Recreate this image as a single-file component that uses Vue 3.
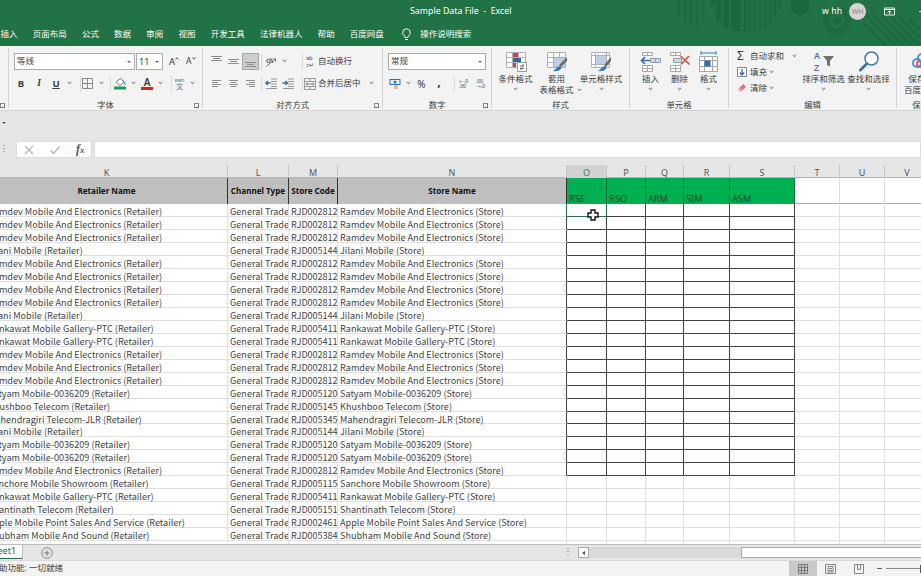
<template>
  <div class="window">
    <header class="top">
      <svg class="deco" width="260" height="46" viewBox="0 0 260 46">
        <g stroke="#1b643b" fill="none">
          <path
            d="M19 0V16M25 0V22M31 0V26M37 0V28M43 0V20"
            stroke-width="2.4"
            opacity="0.75"
          />
          <path d="M53 0V6M59 0V22M66 0V28" stroke-width="5" />
          <path d="M76 0V31" stroke-width="9" />
          <path
            d="M85 0V32M90 0V32M95 0V31M100 0V30M105 0V28M110 0V24M115 0V18M120 0V10"
            stroke-width="2.5"
            opacity="0.8"
          />
          <circle cx="177" cy="21" r="11" stroke-width="6" opacity="0.7" />
          <path
            d="M203 22L226 46M205 15L236 46M212 14L244 46M222 16L252 46M231 17L260 46M240 18L260 38M249 19L260 30"
            stroke-width="3"
            opacity="0.8"
          />
        </g>
        <circle cx="140" cy="6" r="9.5" fill="#1b643b" />
        <circle cx="177" cy="21" r="4" fill="#1b643b" opacity="0.8" />
      </svg>
      <div class="title-bar">
        <span class="file-name">Sample Data File &nbsp;-&nbsp; Excel</span>
        <span class="user">w hh</span>
        <span class="avatar">WH</span>
        <svg class="ribbon-toggle" width="11" height="9" viewBox="0 0 11 9">
          <path d="M.5 1H10.5V8H.5ZM.5 2.5H10.5" fill="none" stroke="#e9f3ed" />
          <path d="M5.5 7V4M3.8 5.4L5.5 3.7L7.2 5.4" fill="none" stroke="#fff" />
        </svg>
        <span class="minimize"></span>
      </div>
      <nav class="tabs">
        <span v-for="tab in tabs" :key="tab">{{ tab }}</span>
        <svg class="bulb" width="9" height="13" viewBox="0 0 9 13">
          <path
            d="M3 9.5V8.4C1.500 7.300 .7 6.200 .7 4.600A3.800 3.800 0 0 1 8.300 4.600C8.300 6.200 7.500 7.300 6 8.400V9.500ZM3 11.500H6"
            fill="none"
            stroke="#fff"
          />
        </svg>
        <span>操作说明搜索</span>
      </nav>
    </header>

    <section class="ribbon">
      <div class="group edge"><i class="launcher"></i></div>

      <div class="group font">
        <div class="row">
          <div class="select family">等线<i class="caret"></i></div>
          <div class="select size">11<i class="caret"></i></div>
          <span class="grow-font">A
            <svg width="4" height="3" viewBox="0 0 4 3"><path d="M.5 2.5L2 .8L3.500 2.500" fill="none" stroke="#555" /></svg>
          </span>
          <span class="grow-font small">A
            <svg width="4" height="3" viewBox="0 0 4 3"><path d="M.5 .5L2 2.200L3.500 .5" fill="none" stroke="#555" /></svg>
          </span>
        </div>
        <div class="row tools">
          <b>B</b>
          <em>I</em>
          <u>U</u>
          <i class="chev"></i>
          <i class="sep"></i>
          <svg width="11" height="11" viewBox="0 0 11 11">
            <path d="M.5 .5H10.5V10.500H.5ZM5.500 .5V10.500M.5 5.500H10.500" fill="none" stroke="#8a8a8a" />
          </svg>
          <i class="chev"></i>
          <i class="sep"></i>
          <svg width="12" height="13" viewBox="0 0 12 13">
            <path d="M3 4L6.500 1.500L10 5L6 8.500L2.500 5.500Z" fill="#fff" stroke="#777" />
            <path d="M9.500 4C11 5 11 6.500 11 8" fill="none" stroke="#3d7cb8" />
            <rect y="9.500" width="12" height="3" fill="#14a05a" />
          </svg>
          <i class="chev"></i>
          <span class="font-color">A</span>
          <i class="chev"></i>
          <i class="sep"></i>
          <span class="pinyin"><small>wén</small>文</span>
          <i class="chev"></i>
        </div>
        <div class="name">字体<i class="launcher"></i></div>
      </div>

      <div class="group align">
        <div class="row tools">
          <svg v-for="(d, i) in vertical" :key="d" :class="{ picked: i === 2 }" width="17" height="17" viewBox="0 0 17 17">
            <path :d="d" stroke="#8c8c8c" />
          </svg>
          <i class="sep"></i>
          <svg width="12" height="12" viewBox="0 0 12 12">
            <path d="M1 10.500L10.500 3M7.500 3H10.500V6" fill="none" stroke="#777" />
            <circle cx="3.500" cy="5" r="1.700" fill="none" stroke="#555" />
            <path d="M5.500 2L8 7" stroke="#555" />
          </svg>
          <i class="chev"></i>
          <i class="sep"></i>
          <span class="wrap-icon"><span>ab</span><span>c↵</span></span>
          <span class="text">自动换行</span>
        </div>
        <div class="row tools">
          <svg v-for="d in horizontal" :key="d" width="17" height="17" viewBox="0 0 17 17">
            <path :d="d" stroke="#8c8c8c" />
          </svg>
          <i class="sep"></i>
          <svg width="12" height="11" viewBox="0 0 12 11">
            <path d="M6 1H12M6 3.500H12M6 6H12M6 8.500H12M1 10.500H12" stroke="#999" />
            <path d="M5.500 5H.8M2.800 3L.8 5L2.800 7" fill="none" stroke="#2f6fae" stroke-width="1.300" />
          </svg>
          <svg width="12" height="11" viewBox="0 0 12 11">
            <path d="M6 1H12M6 3.500H12M6 6H12M6 8.500H12M1 10.500H12" stroke="#999" />
            <path d="M.5 5H5.500M3.500 3L5.500 5L3.500 7" fill="none" stroke="#2f6fae" stroke-width="1.300" />
          </svg>
          <i class="sep"></i>
          <svg width="12" height="12" viewBox="0 0 12 12">
            <path d="M.5 .5H11.500V11.500H.5ZM.5 3.500H11.500M.5 8.500H11.500M6 .5V3.500M6 8.500V11.500" fill="none" stroke="#999" />
            <path d="M2 6H10M3.500 4.800L2 6L3.500 7.200M8.500 4.800L10 6L8.500 7.200" fill="none" stroke="#666" stroke-width=".8" />
          </svg>
          <span class="text">合并后居中</span>
          <i class="chev"></i>
        </div>
        <div class="name">对齐方式<i class="launcher"></i></div>
      </div>

      <div class="group number">
        <div class="row">
          <div class="select format">常规<i class="caret"></i></div>
        </div>
        <div class="row tools">
          <svg width="12" height="12" viewBox="0 0 12 12">
            <rect x="1" y="1.500" width="10" height="5" fill="#e8f0f8" stroke="#2f6fae" />
            <circle cx="6" cy="4" r="1.500" fill="#2f6fae" />
            <path d="M5 8H9M5 10H9" stroke="#e2a95c" stroke-width="1.500" />
          </svg>
          <i class="chev"></i>
          <span class="percent">%</span>
          <span class="comma">,</span>
          <i class="sep"></i>
          <span class="decimals"><span>←.0</span><span>.00</span></span>
          <span class="decimals"><span>.00</span><span>→.0</span></span>
        </div>
        <div class="name">数字<i class="launcher"></i></div>
      </div>

      <div class="group styles">
        <div class="bigs">
          <div class="big">
            <svg width="22" height="21" viewBox="0 0 22 21">
              <path d="M1.500 1.500H20.500V16.500H1.500ZM1.500 6.500H20.500M1.500 11.500H20.500M7.500 1.500V16.500M13.500 1.500V16.500" fill="#fff" stroke="#b0b0b0" />
              <path d="M8 2H13V6H8ZM8 12H11V16H8Z" fill="#c8414b" />
              <path d="M8 7H16V11H8Z" fill="#36659b" />
              <path d="M12.500 11.500H21.500V20.500H12.500Z" fill="#fff" stroke="#999" />
              <path d="M15 15H19M15 17.500H19M18.500 13L15.500 19" stroke="#555" stroke-width=".8" />
            </svg>
            <span>条件格式</span>
            <i class="chev"></i>
          </div>
          <div class="big">
            <svg width="22" height="21" viewBox="0 0 22 21">
              <path d="M1.500 1.500H19.500V16.500H1.500ZM1.500 6.500H19.500M1.500 11.500H19.500M7.500 1.500V16.500M13.500 1.500V16.500" fill="#fff" stroke="#b0b0b0" />
              <path d="M8 7H19V16H8Z" fill="#bccfe5" />
              <path d="M21 6V10L15 16L13 14Z" fill="#6d6d6d" />
              <path d="M14.500 15C17 18 13 21 7 20C10 19 10 15 14.500 15Z" fill="#3b7ab8" />
            </svg>
            <span>套用</span>
            <span class="second">表格格式<i class="chev"></i></span>
          </div>
          <div class="big">
            <svg width="22" height="21" viewBox="0 0 22 21">
              <path d="M1.500 1.500H19.500V16.500H1.500ZM1.500 4.500H19.500M1.500 13.500H19.500M5.500 1.500V16.500M16.500 1.500V16.500" fill="#fff" stroke="#b0b0b0" />
              <path d="M6 5H16V13H6Z" fill="#bccfe5" />
              <path d="M21 6V10L16 16L14 14Z" fill="#6d6d6d" />
              <path d="M15.500 15C18 18 14 21 8 20C11 19 11 15 15.500 15Z" fill="#3b7ab8" />
            </svg>
            <span>单元格样式</span>
            <i class="chev"></i>
          </div>
        </div>
        <div class="name">样式</div>
      </div>

      <div class="group cells">
        <div class="bigs">
          <div class="big">
            <svg width="21" height="21" viewBox="0 0 21 21">
              <path d="M2.500 1.500H12.500V4.500H2.500ZM7.500 1.500V4.500M2.500 14.500H12.500V20.500H2.500ZM7.500 14.500V20.500M2.500 17.500H12.500" fill="#fff" stroke="#a8a8a8" />
              <path d="M10.500 7.500H20.500V11.500H10.500ZM15.500 7.500V11.500" fill="#c9d9ea" stroke="#8aa0b8" />
              <path d="M10 9.500H1.500M5 6L1.500 9.500L5 13" fill="none" stroke="#2f6fae" stroke-width="1.700" />
            </svg>
            <span>插入</span>
            <i class="chev"></i>
          </div>
          <div class="big">
            <svg width="21" height="21" viewBox="0 0 21 21">
              <path d="M1.500 1.500H11.500V4.500H1.500ZM6.500 1.500V4.500M1.500 14.500H11.500V20.500H1.500ZM6.500 14.500V20.500M1.500 17.500H11.500" fill="#fff" stroke="#a8a8a8" />
              <path d="M4.500 7.500H12.500V11.500H4.500Z" fill="#c9d9ea" stroke="#8aa0b8" />
              <path d="M11.500 5L20.500 13.500M20 5L12 13.500" stroke="#d4583f" stroke-width="1.700" />
            </svg>
            <span>删除</span>
            <i class="chev"></i>
          </div>
          <div class="big">
            <svg width="21" height="21" viewBox="0 0 21 21">
              <path d="M1.500 5.500H19.500V20.500H1.500ZM1.500 9.500H19.500M1.500 15.500H19.500M6.500 5.500V20.500M14.500 5.500V20.500" fill="#fff" stroke="#a8a8a8" />
              <path d="M6.500 9.500H12.500V15.500H6.500Z" fill="#2f6fae" />
              <path d="M3 2H18M3 0V4M18 0V4" stroke="#3b7ab8" />
            </svg>
            <span>格式</span>
            <i class="chev"></i>
          </div>
        </div>
        <div class="name">单元格</div>
      </div>

      <div class="group editing">
        <div class="bigs">
          <div class="stack">
            <div class="line"><span class="sigma">Σ</span>自动求和<i class="chev far"></i></div>
            <div class="line">
              <svg width="10" height="10" viewBox="0 0 10 10">
                <path d="M.5 .5H9.500V9.500H.5Z" fill="#fff" stroke="#8a8a8a" />
                <path d="M5 2V8M2.800 5.500L5 8L7.200 5.500" fill="none" stroke="#2f6fae" stroke-width="1.300" />
              </svg>
              填充<i class="chev"></i>
            </div>
            <div class="line">
              <svg width="10" height="10" viewBox="0 0 10 10">
                <path d="M1 6L6.500 1L9 4L3.500 9Z" fill="#dd7288" />
                <path d="M1 6L3.500 9L5 7.500L2.500 4.500Z" fill="#efadb9" />
              </svg>
              清除<i class="chev"></i>
            </div>
          </div>
          <div class="big sort">
            <svg width="22" height="21" viewBox="0 0 22 21">
              <text x="1" y="8" class="letter a">A</text>
              <text x="1" y="20" class="letter z">Z</text>
              <path d="M10 5H21L17 10V15.500L14 14V10Z" fill="#707070" />
            </svg>
            <span>排序和筛选</span>
            <i class="chev"></i>
          </div>
          <div class="big find">
            <svg width="22" height="21" viewBox="0 0 22 21">
              <circle cx="13.500" cy="7.500" r="6.500" fill="#fff" stroke="#3b78b5" stroke-width="1.500" />
              <path d="M9 12.500L1.500 20" stroke="#3b6fa5" stroke-width="2.600" />
            </svg>
            <span>查找和选择</span>
            <i class="chev"></i>
          </div>
        </div>
        <div class="name">编辑</div>
      </div>

      <div class="group save">
        <div class="bigs">
          <div class="big">
            <svg width="22" height="21" viewBox="0 0 22 21">
              <circle cx="7" cy="12" r="4" fill="none" stroke="#3c9be0" stroke-width="2" />
              <circle cx="12" cy="7" r="4" fill="none" stroke="#2f9bd8" stroke-width="2" />
              <circle cx="10" cy="13" r="3" fill="none" stroke="#e5566b" stroke-width="2" />
            </svg>
            <span>保存到</span>
            <span class="second">百度网盘</span>
          </div>
        </div>
        <div class="name">保存</div>
      </div>
    </section>

    <div class="quick"><i></i></div>

    <div class="formula">
      <span class="grip"></span>
      <div class="buttons">
        <svg width="10" height="10" viewBox="0 0 10 10">
          <path d="M1 1L9 9M9 1L1 9" stroke="#b5b5b5" stroke-width="1.200" />
        </svg>
        <svg width="10" height="10" viewBox="0 0 10 10">
          <path d="M.8 5.500L3.500 8.500L9.500 1.500" fill="none" stroke="#b5b5b5" stroke-width="1.400" />
        </svg>
        <span class="fx">f<small>x</small></span>
      </div>
      <div class="input"></div>
    </div>

    <main class="sheet">
      <div class="cols letters">
        <span v-for="c in columns" :key="c" :class="{ active: c === 'O' }">{{ c }}</span>
      </div>
      <div class="cols head">
        <span class="gray">Retailer Name</span>
        <span class="gray">Channel Type</span>
        <span class="gray">Store Code</span>
        <span class="gray">Store Name</span>
        <span v-for="h in roles" :key="h" class="green">{{ h }}</span>
        <span></span>
        <span></span>
        <span></span>
      </div>
      <div v-for="(row, i) in rows" :key="i" class="cols data" :class="{ boxed: i < 21 }">
        <span>{{ row[0] }} (Retailer)</span>
        <span class="clip">General Trade</span>
        <span class="code">{{ row[1] }}</span>
        <span>{{ row[0] }} (Store)</span>
        <span v-for="n in 8" :key="n" :class="{ box: n < 6, selected: i === 0 && n === 1 }"></span>
      </div>
      <div class="cols data">
        <span v-for="c in columns" :key="c"></span>
      </div>
      <svg class="cursor" width="12" height="12" viewBox="0 0 12 12">
        <path d="M4 1H8V4H11V8H8V11H4V8H1V4H4Z" fill="#fff" stroke="#111" stroke-width="1.400" />
      </svg>
    </main>

    <div class="sheet-bar">
      <span class="sheet-tab">Sheet1</span>
      <svg class="add" width="12" height="12" viewBox="0 0 12 12">
        <circle cx="6" cy="6" r="5.300" fill="none" stroke="#8a8a8a" />
        <path d="M6 3.200V8.800M3.200 6H8.800" stroke="#777" />
      </svg>
      <span class="grip"></span>
      <span class="arrow"><i></i></span>
      <span class="track"></span>
      <span class="thumb"></span>
    </div>

    <footer class="status">
      <span class="ready">辅助功能: 一切就绪</span>
      <span class="view on">
        <svg width="10" height="10" viewBox="0 0 10 10">
          <path d="M.5 .5H9.500V9.500H.5ZM3.500 .5V9.500M6.500 .5V9.500M.5 3.500H9.500M.5 6.500H9.500" fill="none" stroke="#777" />
        </svg>
      </span>
      <span class="view">
        <svg width="11" height="10" viewBox="0 0 11 10">
          <path d="M.5 .5H10.500V9.500H.5ZM3 2.500H8V8H3ZM4 4.500H7M4 6.500H7" fill="none" stroke="#858585" />
        </svg>
      </span>
      <span class="view">
        <svg width="10" height="10" viewBox="0 0 10 10">
          <path d="M.5 .5H9.500V9.500H.5ZM3.500 .5V5.500H6.500V.5" fill="none" stroke="#858585" />
        </svg>
      </span>
      <span class="zoom-out"></span>
      <span class="slider"></span>
      <span class="knob"></span>
    </footer>
  </div>
</template>

<script setup>
const tabs = [
  "插入",
  "页面布局",
  "公式",
  "数据",
  "审阅",
  "视图",
  "开发工具",
  "法律机器人",
  "帮助",
  "百度网盘"
];

const vertical = [
  "M3 3.5H14M5 5.500H12M3 7.500H14",
  "M3 6.500H14M5 8.500H12M3 10.500H14",
  "M3 9.500H14M5 11.500H12M3 13.500H14"
];
const horizontal = [
  "M4 5.500H13M4 7.500H10M4 9.500H13M4 11.500H10",
  "M4 5.500H13M5.500 7.500H11.500M4 9.500H13M5.500 11.500H11.500",
  "M4 5.500H13M7 7.500H13M4 9.500H13M7 11.500H13"
];

const columns = ["K", "L", "M", "N", "O", "P", "Q", "R", "S", "T", "U", "V"];
const roles = ["RSE", "RSO", "ARM", "SIM", "ASM"];

const ramdev = ["Ramdev Mobile And Electronics", "RJD002812"];
const jilani = ["Jilani Mobile", "RJD005144"];
const rankawat = ["Rankawat Mobile Gallery-PTC", "RJD005411"];
const satyam = ["Satyam Mobile-0036209", "RJD005120"];

const rows = [
  ramdev,
  ramdev,
  ramdev,
  jilani,
  ramdev,
  ramdev,
  ramdev,
  ramdev,
  jilani,
  rankawat,
  rankawat,
  ramdev,
  ramdev,
  ramdev,
  satyam,
  ["Khushboo Telecom", "RJD005145"],
  ["Mahendragiri Telecom-JLR", "RJD005345"],
  jilani,
  satyam,
  satyam,
  ramdev,
  ["Sanchore Mobile Showroom", "RJD005115"],
  rankawat,
  ["Shantinath Telecom", "RJD005151"],
  ["Apple Mobile Point Sales And Service", "RJD002461"],
  ["Shubham Mobile And Sound", "RJD005384"]
];
</script>

<style>
body {
  overflow: hidden;
}
</style>

<style scoped>
.window {
  width: 921px;
  height: 576px;
  overflow: hidden;
  display: flex;
  flex-direction: column;
  background: #e6e6e6;
  color: #3c3c3c;
  font-family: "Noto Sans", "Noto Sans CJK SC", sans-serif;
  font-size: 8.5px;
  line-height: 1;
  white-space: nowrap;
}

.window * {
  box-sizing: border-box;
}

svg {
  display: block;
  flex: none;
}

/* title and tabs */
.top {
  position: relative;
  flex: none;
  height: 46px;
  background: #217346;
  color: #fff;
}

.deco {
  position: absolute;
  right: 1px;
  top: 0;
  opacity: 0.7;
}

.title-bar {
  position: relative;
  display: flex;
  align-items: center;
  height: 22px;
  padding-left: 410px;
  font-size: 8.8px;
}

.title-bar > * {
  flex: none;
}

.file-name {
  width: 412px;
}

.user {
  width: 27px;
}

.avatar {
  width: 17px;
  height: 17px;
  border-radius: 50%;
  background: #d5d3d4;
  color: #8c8088;
  font-size: 7px;
  line-height: 17px;
  text-align: center;
}

.ribbon-toggle {
  margin-left: 18px;
}

.minimize {
  width: 10px;
  height: 1px;
  margin-left: 24px;
  background: #fff;
}

.tabs {
  position: relative;
  display: flex;
  align-items: center;
  height: 24px;
  gap: 15.2px;
  padding-left: 0.5px;
}

.bulb {
  margin: 0 -6px 0 3px;
}

/* ribbon */
.ribbon {
  display: flex;
  flex: none;
  height: 65px;
  padding-top: 2px;
  background: #f3f3f3;
  border-bottom: 1px solid #d5d5d5;
}

.group {
  position: relative;
  display: flex;
  flex: none;
  flex-direction: column;
  height: 60px;
  border-right: 1px solid #d2d2d2;
}

.edge {
  width: 9px;
}

.font {
  width: 194px;
}

.align {
  width: 180px;
}

.number {
  width: 109px;
}

.styles {
  width: 138px;
}

.cells {
  width: 99px;
}

.editing {
  width: 168px;
}

.save {
  width: 48px;
}

.font,
.align,
.number {
  padding-top: 5px;
}

.row {
  display: flex;
  align-items: center;
  height: 17px;
}

.row + .row {
  margin-top: 5px;
}

.font .row:first-child {
  padding-left: 5px;
}

.tools {
  display: grid;
  justify-items: center;
}

.font .tools {
  grid-template-columns: 18px 18px 16px 10px 7px 13px 14px 3px 18px 9px 18px 9px 7px 15px 10px;
  padding-left: 3px;
}

.align .tools {
  grid-template-columns: 17px 17px 17px 3px 17px 10px 14px 14px 38px;
  padding-left: 5px;
}

.align .tools + .tools {
  grid-template-columns: 17px 17px 17px 3px 17px 17px 7px 14px 49px 10px;
}

.number .tools {
  grid-template-columns: 20px 6px 21px 14px 9px 17px 17px;
  padding-left: 2px;
}

.select {
  display: flex;
  align-items: center;
  justify-content: space-between;
  height: 17px;
  padding: 0 3px 0 2px;
  background: #fff;
  border: 1px solid #ababab;
}

.family {
  width: 121px;
}

.size {
  width: 27px;
  margin-left: 1px;
  font-size: 9px;
}

.format {
  width: 98px;
  margin-left: 5px;
}

.caret {
  border: 2px solid transparent;
  border-top-color: #666;
  border-bottom: 0;
}

.chev {
  flex: none;
  width: 3px;
  height: 3px;
  border: solid #888;
  border-width: 0 1px 1px 0;
  transform: rotate(45deg) translate(-1px, -1px);
}

.sep {
  justify-self: end;
  width: 1px;
  height: 16px;
  background: #dadada;
}

.grow-font {
  display: flex;
  margin-left: 6px;
  font-size: 9.5px;
}

.small {
  margin-left: 7px;
  font-size: 8.5px;
}

.tools b,
.tools em,
.tools u {
  font-size: 9.5px;
  font-weight: 700;
}

.tools em {
  font-family: "Liberation Serif", serif;
}

.font-color {
  width: 12px;
  border-bottom: 3px solid #d8202a;
  font-size: 10px;
  font-weight: 600;
  line-height: 10px;
  text-align: center;
}

.pinyin {
  display: flex;
  flex-direction: column;
  align-items: center;
  font-size: 7px;
  color: #53708f;
}

.pinyin small {
  font-size: 5px;
}

.picked {
  background: #cdcdcd;
  outline: 1px solid #a8a8a8;
  outline-offset: -1px;
}

.wrap-icon,
.decimals {
  display: flex;
  flex-direction: column;
}

.wrap-icon {
  font-size: 5.5px;
  line-height: 7px;
}

.text {
  justify-self: start;
  margin-left: 1px;
}

.percent {
  font-size: 10px;
}

.comma {
  font-size: 13px;
  font-weight: 700;
  line-height: 8px;
  transform: translateY(-3px);
}

.decimals {
  font-size: 5px;
}

.name {
  position: absolute;
  left: 0;
  right: 0;
  bottom: -1px;
  font-size: 8.3px;
  line-height: 9px;
  text-align: center;
}

.launcher {
  position: absolute;
  right: 3px;
  bottom: 1px;
  width: 5px;
  height: 5px;
  border: solid #888;
  border-width: 1px 0 0 1px;
}

.launcher::after {
  content: "";
  position: absolute;
  right: 0;
  bottom: 0;
  width: 3px;
  height: 3px;
  border: solid #777;
  border-width: 0 1px 1px 0;
}

.edge .launcher {
  bottom: 0;
}

.bigs {
  display: flex;
  padding-top: 3px;
}

.big {
  display: flex;
  flex: none;
  flex-direction: column;
  align-items: center;
  width: 41px;
}

.big > span {
  height: 11px;
  margin-top: 3px;
}

.big > .second {
  display: flex;
  height: 9px;
  margin: 0;
  gap: 4px;
}

.big > .chev {
  margin-top: 2px;
}

.second .chev {
  margin: 3px -7px 0 0;
}

.styles .bigs {
  padding-left: 3px;
}

.styles .big:last-child {
  width: 48px;
}

.cells .bigs {
  padding-left: 6px;
}

.cells .big {
  width: 29px;
}

.stack {
  display: flex;
  flex-direction: column;
  width: 72px;
  padding-left: 8px;
}

.line {
  display: flex;
  flex: none;
  align-items: center;
  height: 16px;
  gap: 3px;
}

.stack .line:first-child {
  height: 10px;
  margin-bottom: 3px;
}

.sigma {
  width: 10px;
  font-size: 12px;
}

.far {
  margin-left: 6px;
}

.editing .big {
  width: 45px;
}

.letter {
  font-size: 9px;
  font-weight: 600;
}

.a {
  fill: #3b7ab8;
}

.z {
  fill: #8c5cab;
}

.save .big {
  width: 48px;
}

/* quick access and formula bar */
.quick {
  flex: none;
  height: 30px;
  padding: 11px 0 0 2px;
}

.quick i {
  display: block;
  width: 4px;
  height: 4px;
  border: 2px solid transparent;
  border-top: 2px solid #555;
  border-bottom: 0;
}

.formula {
  display: flex;
  flex: none;
  height: 24px;
}

.formula .grip {
  margin: 4px 11px 0 3px;
}

.grip {
  width: 2px;
  height: 9px;
  background: repeating-linear-gradient(#a5a5a5 0 1px, transparent 1px 3px);
}

.buttons {
  display: flex;
  align-items: center;
  gap: 16px;
  width: 76px;
  height: 17px;
  padding-left: 7px;
  background: #fff;
  border: 1px solid #dcdcdc;
}

.fx {
  color: #555;
  font: italic 700 12px "Liberation Serif", serif;
}

.fx small {
  font-size: 9px;
}

.input {
  flex: 1;
  height: 17px;
  margin-left: 2px;
  background: #fff;
  border: 1px solid #dcdcdc;
}

/* grid */
.sheet {
  position: relative;
  flex: none;
  width: 943px;
  height: 379px;
  margin-left: -14px;
  overflow: hidden;
  background: #fff;
}

.cols {
  display: grid;
  grid-template-columns: 242px 61px 49px 229px 40px 39px 38px 46px 65px 45px 45px 45px;
}

.letters {
  height: 13px;
  background: #e6e6e6;
  border-bottom: 1px solid #b5b5b5;
  font-size: 9px;
  line-height: 15px;
  text-align: center;
  color: #555;
}

.letters span {
  border-right: 1px solid #c6c6c6;
}

.letters .active {
  background: #d2d2d2;
  border-bottom: 1px solid #217346;
  color: #3d7d5b;
}

.head {
  height: 26px;
  border-bottom: 1px solid #a9a9a9;
}

.head span {
  border-right: 1px solid #dcdcdc;
}

.head .gray {
  background: #bfbfbf;
  border-right-color: #333;
  color: #111;
  font-weight: 700;
  font-size: 8.1px;
  line-height: 26px;
  text-align: center;
}

.head .green {
  padding: 15px 0 0 2px;
  background: #00b050;
  border-right-color: #146c39;
  color: #0d4a26;
  font-size: 9.2px;
  line-height: 11px;
}

.data {
  height: 12.98px;
  color: #444;
  font-family: "Noto Sans CJK SC", sans-serif;
  font-size: 9.12px;
  line-height: 14.5px;
}

.data span {
  height: 12.98px;
  padding-left: 2px;
  border: solid #e0e0e0;
  border-width: 0 1px 1px 0;
}

.data .clip {
  overflow: hidden;
}

.data .code {
  letter-spacing: -0.05px;
}

.boxed span:nth-child(4) {
  border-right-color: #444;
}

.boxed .box {
  border-color: #444;
}

.boxed .selected {
  border-color: #217346;
  box-shadow: -1px 0 #217346;
}

.cursor {
  position: absolute;
  left: 601px;
  top: 44px;
}

/* bottom bars */
.sheet-bar {
  display: flex;
  flex: none;
  align-items: center;
  height: 16px;
  border-top: 1px solid #bdbdbd;
}

.sheet-tab {
  align-self: flex-start;
  width: 36px;
  height: 14px;
  margin-left: -13px;
  padding-right: 8px;
  background: #fff;
  border-right: 1px solid #bdbdbd;
  border-bottom: 1px solid #217346;
  color: #217346;
  font-size: 9px;
  line-height: 11px;
  text-align: right;
}

.add {
  margin-left: 18px;
}

.sheet-bar .grip {
  margin-left: 514px;
}

.arrow {
  display: flex;
  align-items: center;
  justify-content: center;
  width: 11px;
  height: 11px;
  margin-left: 9px;
  background: #fff;
  border: 1px solid #ababab;
}

.arrow i {
  border: 2px solid transparent;
  border-left: 0;
  border-right: 3px solid #555;
}

.track {
  width: 152px;
  height: 11px;
  background: #dadada;
}

.thumb {
  flex: 1;
  height: 11px;
  background: #fff;
  border: 1px solid #ababab;
  border-right: 0;
}

.status {
  display: flex;
  align-items: center;
  flex: none;
  height: 16px;
  background: #f3f3f3;
  border-top: 1px solid #d8d8d8;
}

.status > * {
  flex: none;
}

.ready {
  width: 798px;
  margin-left: -9.5px;
}

.view {
  display: flex;
  align-items: center;
  justify-content: center;
  width: 28px;
  height: 15px;
}

.on {
  background: #c9c9c9;
}

.zoom-out {
  width: 5px;
  height: 1px;
  margin-left: 4px;
  background: #666;
}

.slider {
  width: 34px;
  height: 1px;
  margin-left: 4px;
  background: #888;
}

.knob {
  width: 3px;
  height: 8px;
  background: #555;
}
</style>
